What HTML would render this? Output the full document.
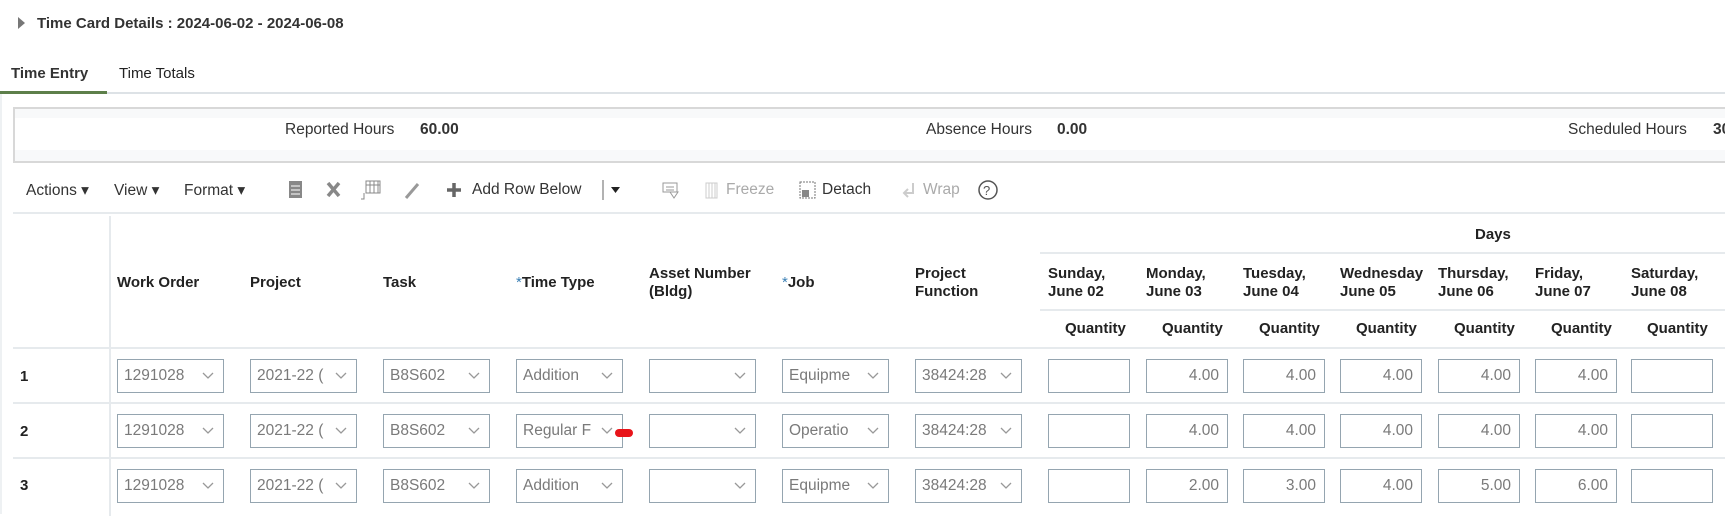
<!DOCTYPE html>
<html><head><meta charset="utf-8"><style>
*{margin:0;padding:0;box-sizing:border-box}
body{width:1725px;height:511px;overflow:hidden;background:#fff;font-family:"Liberation Sans",Arial,sans-serif;color:#333;position:relative}
.a{position:absolute;white-space:nowrap}
.b{font-weight:bold}
.hl{position:absolute;height:2px;background:#e6eaed}
.in{position:absolute;height:34px;border:1.5px solid #95a5b0;background:#fff;color:#7a7a7a;font-size:15.5px;line-height:31px;padding-left:6px;overflow:hidden}
.in svg{position:absolute;right:9px;top:12px}
.q{position:absolute;height:34px;width:82px;border:1.5px solid #95a5b0;background:#fff;color:#7a7a7a;font-size:15.5px;line-height:32px;text-align:right;padding-right:8px}
.h{font-weight:bold;font-size:15px;line-height:18px;color:#222}
.t{font-size:15.5px;color:#333}
.g{color:#aaa}
</style></head><body>
<div class="a" style="left:18px;top:17px;width:0;height:0;border-left:7px solid #777;border-top:6px solid transparent;border-bottom:6px solid transparent"></div>
<div class="a b" style="left:37px;top:15px;font-size:15px;color:#333">Time Card Details : 2024-06-02 - 2024-06-08</div>
<div class="a b" style="left:11px;top:65px;font-size:15px">Time Entry</div>
<div class="a" style="left:119px;top:65px;font-size:15px;color:#222">Time Totals</div>
<div class="a" style="left:0;top:92px;width:1725px;height:2px;background:#dde2e6"></div>
<div class="a" style="left:0;top:91px;width:107px;height:3px;background:#5d7f4a"></div>
<div class="a" style="left:0;top:94px;width:2px;height:420px;background:#eef1f3"></div>
<div class="a" style="left:13px;top:107px;width:1740px;height:56px;border:2px solid #d8d8d8;background:#fff"></div>
<div class="a" style="left:15px;top:109px;width:1740px;height:9px;background:#f8f9fa"></div>
<div class="a" style="left:15px;top:150px;width:1740px;height:11px;background:#f8f9fa"></div>
<div class="a t" style="left:285px;top:121px">Reported Hours</div>
<div class="a b t" style="left:420px;top:121px">60.00</div>
<div class="a t" style="left:926px;top:121px">Absence Hours</div>
<div class="a b t" style="left:1057px;top:121px">0.00</div>
<div class="a t" style="left:1568px;top:121px">Scheduled Hours</div>
<div class="a b t" style="left:1713px;top:121px">30</div>
<div class="a t" style="left:26px;top:181px">Actions ▾</div>
<div class="a t" style="left:114px;top:181px">View ▾</div>
<div class="a t" style="left:184px;top:181px">Format ▾</div>
<svg class="a" style="left:286px;top:178px" width="740" height="24">
<rect x="3" y="3" width="13" height="17" fill="#888"/><path d="M5 8h9M5 12h9M5 16h9" stroke="#fff"/>
<path d="M42 5l11 13M53 5l-11 13" stroke="#888" stroke-width="3.5"/>
<path d="M80 3h14v12h-14z M80 7h14M84 3v12M88 3v12M92 3v12 M78 15v6h-3" stroke="#888" fill="none"/>
<path d="M120 20l12-14" stroke="#999" stroke-width="3"/>
<path d="M168 5v14M161 12h14" stroke="#666" stroke-width="3.5"/>
<path d="M317 2v20" stroke="#666" stroke-width="1"/>
<path d="M325 9h9l-4.5 6z" fill="#222"/>
<path d="M377 5h14v9h-14z M380 9h8M380 12h8 M384 14l4 6 4-6z" stroke="#999" fill="none"/>
<rect x="420" y="5" width="11" height="15" fill="none" stroke="#ccc"/><path d="M423 5v15M426 5v15M429 5v15" stroke="#ccc"/>
<rect x="514" y="4" width="15" height="16" fill="none" stroke="#777" stroke-dasharray="2 1"/><rect x="516" y="12" width="7" height="7" fill="#888"/>
<path d="M627 5v10h-8M622 11l-4 4 4 4" stroke="#ccc" stroke-width="2" fill="none"/>
<circle cx="702" cy="12" r="9" fill="none" stroke="#555" stroke-width="1.5"/>
<text x="697" y="17" font-size="13" fill="#555" font-family="Liberation Sans">?</text>
</svg>
<div class="a t" style="left:472px;top:181px">Add Row Below</div>
<div class="a t g" style="left:726px;top:181px">Freeze</div>
<div class="a t" style="left:822px;top:181px">Detach</div>
<div class="a t g" style="left:923px;top:181px">Wrap</div>
<div class="hl" style="left:13px;top:212px;width:1712px"></div>
<div class="a" style="left:109px;top:216px;width:2px;height:300px;background:#e6eaed"></div>
<div class="hl" style="left:1040px;top:252px;width:685px"></div>
<div class="hl" style="left:1040px;top:309px;width:685px"></div>
<div class="hl" style="left:13px;top:347px;width:1712px"></div>
<div class="hl" style="left:13px;top:402px;width:1712px"></div>
<div class="hl" style="left:13px;top:457px;width:1712px"></div>
<div class="a h" style="left:1475px;top:226px">Days</div>
<div class="a h" style="left:117px;top:274px">Work Order</div>
<div class="a h" style="left:250px;top:274px">Project</div>
<div class="a h" style="left:383px;top:274px">Task</div>
<div class="a h" style="left:516px;top:274px"><span style="color:#3a7fb5;font-weight:normal">*</span>Time Type</div>
<div class="a h" style="left:649px;top:265px">Asset Number<br>(Bldg)</div>
<div class="a h" style="left:782px;top:274px"><span style="color:#3a7fb5;font-weight:normal">*</span>Job</div>
<div class="a h" style="left:915px;top:265px">Project<br>Function</div>
<div class="a h" style="left:1048px;top:265px">Sunday,<br>June 02</div>
<div class="a h" style="left:1146px;top:265px">Monday,<br>June 03</div>
<div class="a h" style="left:1243px;top:265px">Tuesday,<br>June 04</div>
<div class="a h" style="left:1340px;top:265px">Wednesday<br>June 05</div>
<div class="a h" style="left:1438px;top:265px">Thursday,<br>June 06</div>
<div class="a h" style="left:1535px;top:265px">Friday,<br>June 07</div>
<div class="a h" style="left:1631px;top:265px">Saturday,<br>June 08</div>
<div class="a h" style="left:1065px;top:320px">Quantity</div>
<div class="a h" style="left:1162px;top:320px">Quantity</div>
<div class="a h" style="left:1259px;top:320px">Quantity</div>
<div class="a h" style="left:1356px;top:320px">Quantity</div>
<div class="a h" style="left:1454px;top:320px">Quantity</div>
<div class="a h" style="left:1551px;top:320px">Quantity</div>
<div class="a h" style="left:1647px;top:320px">Quantity</div>
<div class="a h" style="left:20px;top:368px">1</div>
<div class="a h" style="left:20px;top:423px">2</div>
<div class="a h" style="left:20px;top:477px">3</div>

<div class="in" style="left:117px;top:359px;width:107px">1291028<svg width="12" height="8"><path d="M1 1l5 5 5-5" stroke="#999" fill="none" stroke-width="1.3"/></svg></div>
<div class="in" style="left:250px;top:359px;width:107px">2021-22 (<svg width="12" height="8"><path d="M1 1l5 5 5-5" stroke="#999" fill="none" stroke-width="1.3"/></svg></div>
<div class="in" style="left:383px;top:359px;width:107px">B8S602<svg width="12" height="8"><path d="M1 1l5 5 5-5" stroke="#999" fill="none" stroke-width="1.3"/></svg></div>
<div class="in" style="left:516px;top:359px;width:107px">Addition<svg width="12" height="8"><path d="M1 1l5 5 5-5" stroke="#999" fill="none" stroke-width="1.3"/></svg></div>
<div class="in" style="left:649px;top:359px;width:107px"><svg width="12" height="8"><path d="M1 1l5 5 5-5" stroke="#999" fill="none" stroke-width="1.3"/></svg></div>
<div class="in" style="left:782px;top:359px;width:107px">Equipme<svg width="12" height="8"><path d="M1 1l5 5 5-5" stroke="#999" fill="none" stroke-width="1.3"/></svg></div>
<div class="in" style="left:915px;top:359px;width:107px">38424:28<svg width="12" height="8"><path d="M1 1l5 5 5-5" stroke="#999" fill="none" stroke-width="1.3"/></svg></div>

<div class="in" style="left:117px;top:414px;width:107px">1291028<svg width="12" height="8"><path d="M1 1l5 5 5-5" stroke="#999" fill="none" stroke-width="1.3"/></svg></div>
<div class="in" style="left:250px;top:414px;width:107px">2021-22 (<svg width="12" height="8"><path d="M1 1l5 5 5-5" stroke="#999" fill="none" stroke-width="1.3"/></svg></div>
<div class="in" style="left:383px;top:414px;width:107px">B8S602<svg width="12" height="8"><path d="M1 1l5 5 5-5" stroke="#999" fill="none" stroke-width="1.3"/></svg></div>
<div class="in" style="left:516px;top:414px;width:107px">Regular F<svg width="12" height="8"><path d="M1 1l5 5 5-5" stroke="#999" fill="none" stroke-width="1.3"/></svg></div>
<div class="in" style="left:649px;top:414px;width:107px"><svg width="12" height="8"><path d="M1 1l5 5 5-5" stroke="#999" fill="none" stroke-width="1.3"/></svg></div>
<div class="in" style="left:782px;top:414px;width:107px">Operatio<svg width="12" height="8"><path d="M1 1l5 5 5-5" stroke="#999" fill="none" stroke-width="1.3"/></svg></div>
<div class="in" style="left:915px;top:414px;width:107px">38424:28<svg width="12" height="8"><path d="M1 1l5 5 5-5" stroke="#999" fill="none" stroke-width="1.3"/></svg></div>
<div class="a" style="left:615px;top:429px;width:18px;height:8px;border-radius:4px;background:#e8141a"></div>

<div class="in" style="left:117px;top:469px;width:107px">1291028<svg width="12" height="8"><path d="M1 1l5 5 5-5" stroke="#999" fill="none" stroke-width="1.3"/></svg></div>
<div class="in" style="left:250px;top:469px;width:107px">2021-22 (<svg width="12" height="8"><path d="M1 1l5 5 5-5" stroke="#999" fill="none" stroke-width="1.3"/></svg></div>
<div class="in" style="left:383px;top:469px;width:107px">B8S602<svg width="12" height="8"><path d="M1 1l5 5 5-5" stroke="#999" fill="none" stroke-width="1.3"/></svg></div>
<div class="in" style="left:516px;top:469px;width:107px">Addition<svg width="12" height="8"><path d="M1 1l5 5 5-5" stroke="#999" fill="none" stroke-width="1.3"/></svg></div>
<div class="in" style="left:649px;top:469px;width:107px"><svg width="12" height="8"><path d="M1 1l5 5 5-5" stroke="#999" fill="none" stroke-width="1.3"/></svg></div>
<div class="in" style="left:782px;top:469px;width:107px">Equipme<svg width="12" height="8"><path d="M1 1l5 5 5-5" stroke="#999" fill="none" stroke-width="1.3"/></svg></div>
<div class="in" style="left:915px;top:469px;width:107px">38424:28<svg width="12" height="8"><path d="M1 1l5 5 5-5" stroke="#999" fill="none" stroke-width="1.3"/></svg></div>

<div class="q" style="left:1048px;top:359px"></div><div class="q" style="left:1146px;top:359px">4.00</div><div class="q" style="left:1243px;top:359px">4.00</div><div class="q" style="left:1340px;top:359px">4.00</div><div class="q" style="left:1438px;top:359px">4.00</div><div class="q" style="left:1535px;top:359px">4.00</div><div class="q" style="left:1631px;top:359px"></div>
<div class="q" style="left:1048px;top:414px"></div><div class="q" style="left:1146px;top:414px">4.00</div><div class="q" style="left:1243px;top:414px">4.00</div><div class="q" style="left:1340px;top:414px">4.00</div><div class="q" style="left:1438px;top:414px">4.00</div><div class="q" style="left:1535px;top:414px">4.00</div><div class="q" style="left:1631px;top:414px"></div>
<div class="q" style="left:1048px;top:469px"></div><div class="q" style="left:1146px;top:469px">2.00</div><div class="q" style="left:1243px;top:469px">3.00</div><div class="q" style="left:1340px;top:469px">4.00</div><div class="q" style="left:1438px;top:469px">5.00</div><div class="q" style="left:1535px;top:469px">6.00</div><div class="q" style="left:1631px;top:469px"></div>
</body></html>
